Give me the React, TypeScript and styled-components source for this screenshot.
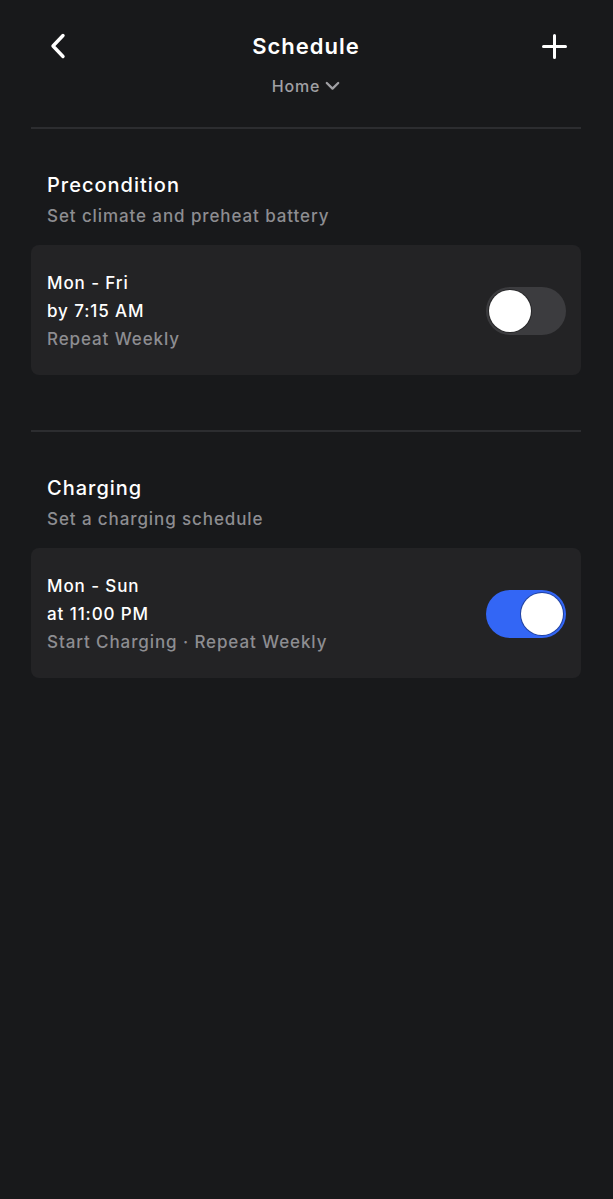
import React from "react";
import styled, { createGlobalStyle } from "styled-components";

const Global = createGlobalStyle`
  html, body { margin: 0; padding: 0; background: #18191b; }
  body { font-family: Inter, "Noto Sans", "Liberation Sans", sans-serif; -webkit-font-smoothing: antialiased; }
`;

const Page = styled.div`
  min-height: 1199px;
  background: #18191b;
  padding: 0 32px 0 31px;
  box-sizing: border-box;
  display: flex;
  flex-direction: column;
`;

const Header = styled.header`
  display: flex;
  flex-direction: column;
  align-items: center;
  padding-top: 30px;
`;

const TopRow = styled.div`
  width: 100%;
  height: 32px;
  display: grid;
  grid-template-columns: 60px 1fr 60px;
  align-items: center;
`;

const IconButton = styled.button<{ $align: "start" | "end" }>`
  background: none;
  border: 0;
  padding: 0;
  display: flex;
  justify-content: ${(p) => (p.$align === "start" ? "flex-start" : "flex-end")};
  padding-${(p) => (p.$align === "start" ? "left" : "right")}: ${(p) => (p.$align === "start" ? "19px" : "14px")};
  color: #fff;
  cursor: pointer;
`;

const Title = styled.h1`
  margin: 0;
  text-align: center;
  color: #fff;
  font-size: 22px;
  font-weight: 600;
  letter-spacing: 1px;
  line-height: 32px;
`;

const Location = styled.div`
  margin-top: 14px;
  height: 20px;
  display: flex;
  align-items: center;
  gap: 5px;
  color: #a0a0a4;
  font-size: 16px;
  font-weight: 500;
  letter-spacing: 0.8px;
`;

const Divider = styled.hr<{ $top: number }>`
  border: 0;
  height: 2px;
  background: #2c2d30;
  margin: ${(p) => p.$top}px 0 0 0;
  width: 100%;
`;

const Section = styled.section`
  display: flex;
  flex-direction: column;
`;

const SectionHead = styled.div`
  padding: 42px 16px 15px;
  display: flex;
  flex-direction: column;
  gap: 3px;
`;

const SectionTitle = styled.h2`
  margin: 0;
  color: #fff;
  font-size: 20px;
  font-weight: 500;
  letter-spacing: 1px;
  line-height: 28px;
`;

const SectionSub = styled.p`
  margin: 0;
  color: #8d8d91;
  font-size: 17px;
  font-weight: 500;
  letter-spacing: 0.9px;
  line-height: 28px;
`;

const Card = styled.div`
  background: #232325;
  border-radius: 8px;
  padding: 24px 15px 22px 16px;
  display: flex;
  align-items: center;
  justify-content: space-between;
`;

const Lines = styled.div`
  display: flex;
  flex-direction: column;
`;

const Line = styled.span<{ $muted?: boolean }>`
  color: ${(p) => (p.$muted ? "#8d8d91" : "#fff")};
  font-size: 17px;
  font-weight: 500;
  letter-spacing: 0.9px;
  line-height: 28px;
`;

const Track = styled.div<{ $on: boolean }>`
  width: 80px;
  height: 48px;
  border-radius: 24px;
  background: ${(p) => (p.$on ? "#3366f5" : "#3c3c3f")};
  display: flex;
  align-items: center;
  justify-content: ${(p) => (p.$on ? "flex-end" : "flex-start")};
  padding: 0 3px;
  box-sizing: border-box;
`;

const Knob = styled.div`
  width: 42px;
  height: 42px;
  border-radius: 50%;
  background: #fff;
  box-shadow: 0 0 0 1px rgba(0, 0, 0, 0.35);
`;

const Toggle = ({ on }: { on: boolean }) => (
  <Track $on={on}>
    <Knob />
  </Track>
);

type Item = { lines: string[]; sub: string; on: boolean };

const ScheduleSection = ({
  title,
  sub,
  item,
  top,
}: {
  title: string;
  sub: string;
  item: Item;
  top: number;
}) => (
  <Section>
    <Divider $top={top} />
    <SectionHead>
      <SectionTitle>{title}</SectionTitle>
      <SectionSub>{sub}</SectionSub>
    </SectionHead>
    <Card>
      <Lines>
        {item.lines.map((l) => (
          <Line key={l}>{l}</Line>
        ))}
        <Line $muted>{item.sub}</Line>
      </Lines>
      <Toggle on={item.on} />
    </Card>
  </Section>
);

export default function App() {
  return (
    <>
      <Global />
      <Page>
        <Header>
          <TopRow>
            <IconButton $align="start" aria-label="Back">
              <svg width="16" height="26" viewBox="0 0 16 26" fill="none">
                <polyline
                  points="13,2.5 3,13 13,23.5"
                  stroke="#fff"
                  strokeWidth="3.4"
                  strokeLinecap="round"
                  strokeLinejoin="round"
                />
              </svg>
            </IconButton>
            <Title>Schedule</Title>
            <IconButton $align="end" aria-label="Add">
              <svg width="25" height="25" viewBox="0 0 25 25" fill="none">
                <path d="M12.5 1.5v22M1.5 12.5h22" stroke="#fff" strokeWidth="3" strokeLinecap="round" />
              </svg>
            </IconButton>
          </TopRow>
          <Location>
            Home
            <svg width="15" height="10" viewBox="0 0 15 10" fill="none">
              <polyline
                points="1.8,2 7.5,7.6 13.2,2"
                stroke="#a0a0a4"
                strokeWidth="2.3"
                strokeLinecap="round"
                strokeLinejoin="round"
              />
            </svg>
          </Location>
        </Header>
        <ScheduleSection
          top={31}
          title="Precondition"
          sub="Set climate and preheat battery"
          item={{ lines: ["Mon - Fri", "by 7:15 AM"], sub: "Repeat Weekly", on: false }}
        />
        <ScheduleSection
          top={55}
          title="Charging"
          sub="Set a charging schedule"
          item={{ lines: ["Mon - Sun", "at 11:00 PM"], sub: "Start Charging · Repeat Weekly", on: true }}
        />
      </Page>
    </>
  );
}
